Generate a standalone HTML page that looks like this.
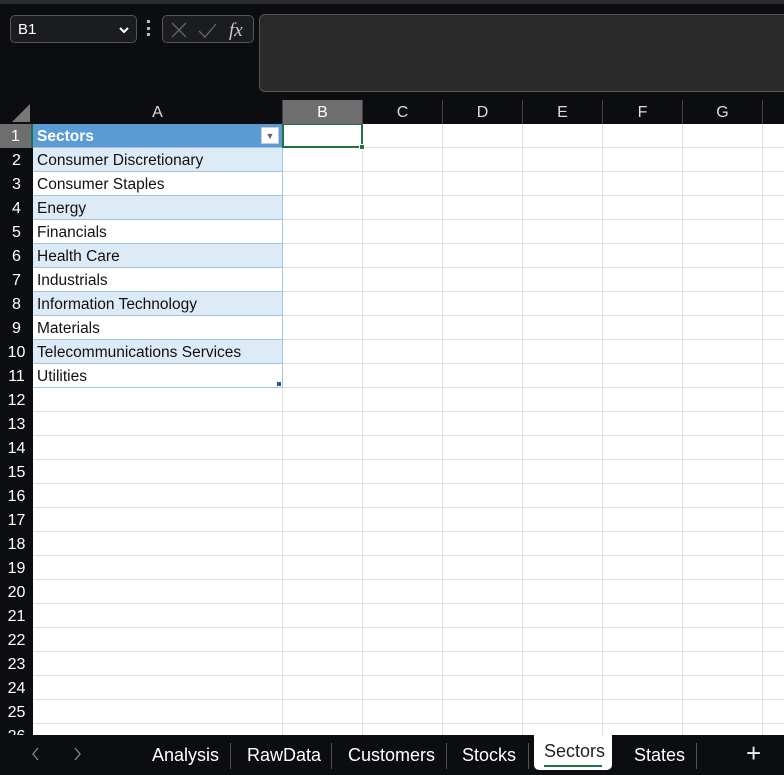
<!DOCTYPE html>
<html><head><style>
*{margin:0;padding:0;box-sizing:border-box}
body{width:784px;height:775px;overflow:hidden;background:#0c0d10;font-family:"Liberation Sans",sans-serif;position:relative}
.abs{position:absolute}
.grid{left:33px;top:124px;width:751px;height:611px;background:#fff;overflow:hidden}
.rh{left:0;width:33px;height:24px;color:#fff;font-size:16px;text-align:center;line-height:25px;background:#0c0d10}
.ch{top:100px;height:24px;color:#ddd;font-size:16px;text-align:center;line-height:25px;border-right:1px solid #444}
.cell{left:0;width:250px;height:24px;font-size:15.5px;line-height:25px;padding-left:4px;color:#111;border-bottom:1px solid #9dc3e6;border-right:1px solid #9dc3e6}
.tab{top:745px;color:#fff;font-size:18px;font-family:"Liberation Sans Narrow","Liberation Sans",sans-serif}
.sep{top:743px;width:1px;height:26px;background:#555}
</style></head><body>
<div class="abs" style="left:0;top:0;width:784px;height:4px;background:#2a2b2e"></div>
<div class="abs" style="left:10px;top:15px;width:127px;height:28px;border:1px solid #555;border-radius:5px;background:#1b1c1f;color:#fff;font-size:15px;line-height:28px;padding-left:7px">B1<svg class="abs" style="right:6px;top:9px" width="12" height="10"><path d="M2 3L6 7L10 3" stroke="#fff" stroke-width="2" fill="none"/></svg></div>
<div class="abs" style="left:147px;top:20px;width:3px;height:16px;border-left:3px dotted #bbb"></div>
<div class="abs" style="left:162px;top:15px;width:92px;height:28px;border:1px solid #555;border-radius:5px;background:#1b1c1f">
<svg width="92" height="28" style="position:absolute;left:0;top:0"><path d="M9 7L23 21M23 7L9 21" stroke="#666" stroke-width="1.3"/><path d="M36 15L42 21L53 8" stroke="#666" stroke-width="1.3" fill="none"/><text x="66" y="20" fill="#ccc" font-family="Liberation Serif" font-style="italic" font-size="19">fx</text></svg></div>
<div class="abs" style="left:259px;top:14px;width:530px;height:78px;border:1px solid #555;border-radius:6px;background:#2a2a2a"></div>
<svg class="abs" style="left:10px;top:103px" width="22" height="20"><path d="M20 1V19H2Z" fill="#777"/></svg>
<div class="abs ch" style="left:33px;width:250px">A</div>
<div class="abs ch" style="left:283px;width:80px;background:#6e6e6e;color:#fff">B</div>
<div class="abs ch" style="left:363px;width:80px">C</div>
<div class="abs ch" style="left:443px;width:80px">D</div>
<div class="abs ch" style="left:523px;width:80px">E</div>
<div class="abs ch" style="left:603px;width:80px">F</div>
<div class="abs ch" style="left:683px;width:80px">G</div>
<div class="abs grid" style="background-color:#fff;background-image:linear-gradient(to right,#e1e1e1 1px,transparent 1px),linear-gradient(to bottom,transparent 23px,#e1e1e1 23px);background-size:80px 24px,100% 24px;background-position:9px 0,0 0">
<div class="abs" style="left:0;top:0;width:249px;height:611px;background-color:#fff;background-image:linear-gradient(to bottom,transparent 23px,#e1e1e1 23px);background-size:100% 24px"></div>
<div class="abs" style="left:0;top:0;width:250px;height:264px;background:#fff"></div>
<div class="abs cell" style="top:0;background:#5b9bd5;color:#fff;font-weight:bold">Sectors<span class="abs" style="right:3px;top:3px;width:18px;height:17px;background:#fff;border:1px solid #ccc;color:#666;font-size:9px;line-height:16px;text-align:center;font-weight:normal">&#9660;</span></div>
<div class="abs cell" style="top:24px;background:#ddebf7">Consumer Discretionary</div>
<div class="abs cell" style="top:48px">Consumer Staples</div>
<div class="abs cell" style="top:72px;background:#ddebf7">Energy</div>
<div class="abs cell" style="top:96px">Financials</div>
<div class="abs cell" style="top:120px;background:#ddebf7">Health Care</div>
<div class="abs cell" style="top:144px">Industrials</div>
<div class="abs cell" style="top:168px;background:#ddebf7">Information Technology</div>
<div class="abs cell" style="top:192px">Materials</div>
<div class="abs cell" style="top:216px;background:#ddebf7">Telecommunications Services</div>
<div class="abs cell" style="top:240px">Utilities</div>
<div class="abs" style="left:244px;top:258px;width:4px;height:4px;background:#2f5597"></div>
<div class="abs" style="left:249px;top:-1px;width:81px;height:25px;border:2px solid #217346"></div>
<div class="abs" style="left:326px;top:20px;width:6px;height:6px;background:#217346;border:1px solid #fff"></div>
</div>
<div class="abs rh" style="top:124px;background:#6e6e6e;border-right:2px solid #217346">1</div>
<div class="abs rh" style="top:148px">2</div><div class="abs rh" style="top:172px">3</div><div class="abs rh" style="top:196px">4</div><div class="abs rh" style="top:220px">5</div><div class="abs rh" style="top:244px">6</div><div class="abs rh" style="top:268px">7</div><div class="abs rh" style="top:292px">8</div><div class="abs rh" style="top:316px">9</div><div class="abs rh" style="top:340px">10</div><div class="abs rh" style="top:364px">11</div><div class="abs rh" style="top:388px">12</div><div class="abs rh" style="top:412px">13</div><div class="abs rh" style="top:436px">14</div><div class="abs rh" style="top:460px">15</div><div class="abs rh" style="top:484px">16</div><div class="abs rh" style="top:508px">17</div><div class="abs rh" style="top:532px">18</div><div class="abs rh" style="top:556px">19</div><div class="abs rh" style="top:580px">20</div><div class="abs rh" style="top:604px">21</div><div class="abs rh" style="top:628px">22</div><div class="abs rh" style="top:652px">23</div><div class="abs rh" style="top:676px">24</div><div class="abs rh" style="top:700px">25</div><div class="abs rh" style="top:724px;height:11px;overflow:hidden">26</div>
<div class="abs" style="left:0;top:735px;width:784px;height:40px;background:#0c0d10"></div>
<svg class="abs" style="left:30px;top:747px" width="60" height="14"><path d="M8 1L3 7L8 13M45 1L50 7L45 13" stroke="#888" stroke-width="1.3" fill="none"/></svg>
<div class="abs tab" style="left:152px">Analysis</div><div class="abs sep" style="left:230px"></div>
<div class="abs tab" style="left:247px">RawData</div><div class="abs sep" style="left:331px"></div>
<div class="abs tab" style="left:348px">Customers</div><div class="abs sep" style="left:446px"></div>
<div class="abs tab" style="left:462px">Stocks</div><div class="abs sep" style="left:528px"></div>
<div class="abs" style="left:534px;top:735px;width:78px;height:35px;background:#fff;border-radius:0 0 5px 5px"></div>
<div class="abs tab" style="left:544px;top:741px;color:#222">Sectors</div>
<div class="abs" style="left:544px;top:765px;width:58px;height:2px;background:#217346"></div>
<div class="abs tab" style="left:634px">States</div><div class="abs sep" style="left:696px"></div>
<div class="abs" style="left:746px;top:738px;color:#eee;font-size:26px">+</div>
</body></html>
